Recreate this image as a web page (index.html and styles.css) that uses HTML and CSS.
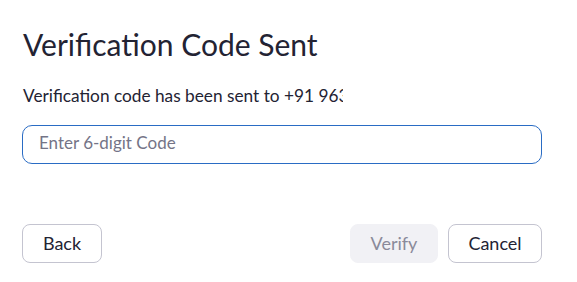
FILE: index.html
```html
<!DOCTYPE html>
<html>
<head>
<meta charset="utf-8">
<link rel="stylesheet" href="styles.css">
</head>
<body>
<div class="dialog">
  <h1 class="title">Verification Code Sent</h1>
  <div class="message">Verification code has been sent to +91 963</div>
  <input class="code-input" type="text" placeholder="Enter 6-digit Code">
  <div class="actions">
    <button class="btn btn-back">Back</button>
    <div class="actions-right">
      <button class="btn btn-verify">Verify</button>
      <button class="btn btn-cancel">Cancel</button>
    </div>
  </div>
</div>
</body>
</html>
```
FILE: styles.css
```css
html, body {
  margin: 0;
  padding: 0;
  background: #ffffff;
}
body {
  font-family: Lato, "Noto Sans", sans-serif;
  color: #232333;
}
.dialog {
  width: 577px;
  height: 282px;
  box-sizing: border-box;
  padding: 24px 35px 0 22px;
  display: flex;
  flex-direction: column;
}
.title {
  margin: 0;
  padding-left: 1px;
  font-size: 30px;
  font-weight: 400;
  line-height: 40px;
  color: #232333;
}
.message {
  margin-top: 20px;
  padding-left: 1px;
  width: 320px;
  overflow: hidden;
  white-space: nowrap;
  font-size: 17.25px;
  line-height: 24px;
}
.code-input {
  margin-top: 17px;
  height: 39px;
  width: 520px;
  box-sizing: border-box;
  border: 1px solid #2a6cc4;
  border-radius: 10px;
  padding: 0 16px 4px 16px;
  font-family: Lato, "Noto Sans", sans-serif;
  font-size: 17px;
  color: #232333;
  outline: none;
}
.code-input::placeholder {
  color: #747487;
}
.actions {
  margin-top: 60px;
  width: 520px;
  display: flex;
  justify-content: space-between;
}
.actions-right {
  display: flex;
  gap: 10px;
}
.btn {
  height: 39px;
  box-sizing: border-box;
  padding: 0 0 2px 0;
  border: 1px solid #c4c4d0;
  border-radius: 8px;
  background: #ffffff;
  font-family: Lato, "Noto Sans", sans-serif;
  font-size: 18px;
  color: #232333;
}
.btn-back {
  width: 80px;
}
.btn-verify {
  width: 88px;
  border-color: #f1f1f5;
  background: #f1f1f5;
  color: #8a8a9a;
}
.btn-cancel {
  width: 94px;
}
```
